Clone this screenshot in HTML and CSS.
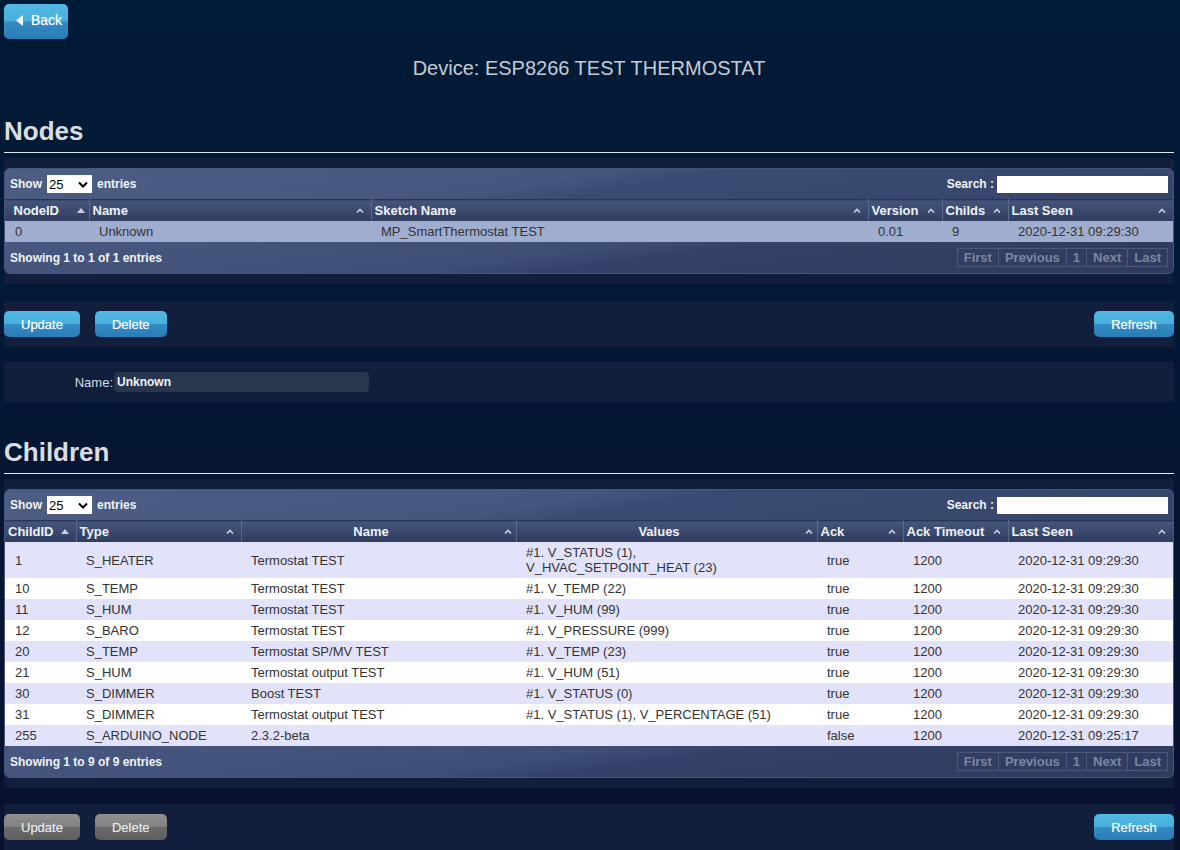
FILE: index.html
```html
<!DOCTYPE html>
<html>
<head>
<meta charset="utf-8">
<title>Device: ESP8266 TEST THERMOSTAT</title>
<link rel="stylesheet" href="styles.css">
</head>
<body>
<div class="page">
  <button class="btn btn-back"><svg class="back-ico" width="7" height="11" viewBox="0 0 7 11"><polygon points="7,0 7,11 0,5.5" fill="#fff"/></svg>Back</button>

  <div class="device-title">Device: ESP8266 TEST THERMOSTAT</div>

  <h2 class="section-title">Nodes</h2>
  <div class="panel">
    <div class="dt-wrapper">
      <div class="dt-top">
        <label class="dt-length">Show <span class="select-box"><select><option>25</option></select><svg width="10" height="7" viewBox="0 0 10 7"><polyline points="1,1.5 5,5.5 9,1.5" fill="none" stroke="#000" stroke-width="2"/></svg></span> entries</label>
        <label class="dt-search">Search :<input type="text"></label>
      </div>
      <table class="dt nodes">
        <colgroup><col style="width:84px"><col style="width:282px"><col style="width:497px"><col style="width:74px"><col style="width:66px"><col style="width:165px"></colgroup>
        <thead>
          <tr>
            <th class="center"><svg class="sort" width="8" height="5" viewBox="0 0 8 5"><polygon points="0,5 8,5 4,0" fill="#c9d0de"/></svg>NodeID</th>
            <th><svg class="sort" width="8" height="5" viewBox="0 0 8 5"><polyline points="1,4.5 4,1.5 7,4.5" fill="none" stroke="#c9d0de" stroke-width="1.6"/></svg>Name</th>
            <th><svg class="sort" width="8" height="5" viewBox="0 0 8 5"><polyline points="1,4.5 4,1.5 7,4.5" fill="none" stroke="#c9d0de" stroke-width="1.6"/></svg>Sketch Name</th>
            <th><svg class="sort" width="8" height="5" viewBox="0 0 8 5"><polyline points="1,4.5 4,1.5 7,4.5" fill="none" stroke="#c9d0de" stroke-width="1.6"/></svg>Version</th>
            <th><svg class="sort" width="8" height="5" viewBox="0 0 8 5"><polyline points="1,4.5 4,1.5 7,4.5" fill="none" stroke="#c9d0de" stroke-width="1.6"/></svg>Childs</th>
            <th><svg class="sort" width="8" height="5" viewBox="0 0 8 5"><polyline points="1,4.5 4,1.5 7,4.5" fill="none" stroke="#c9d0de" stroke-width="1.6"/></svg>Last Seen</th>
          </tr>
        </thead>
        <tbody>
          <tr class="selected"><td>0</td><td>Unknown</td><td>MP_SmartThermostat TEST</td><td>0.01</td><td>9</td><td>2020-12-31 09:29:30</td></tr>
        </tbody>
      </table>
      <div class="dt-bottom">
        <div class="dt-info">Showing 1 to 1 of 1 entries</div>
        <div class="dt-paginate"><span>First</span><span>Previous</span><span>1</span><span>Next</span><span>Last</span></div>
      </div>
    </div>
  </div>

  <div class="panel btn-bar">
    <div class="btn-group">
      <button class="btn">Update</button>
      <button class="btn">Delete</button>
    </div>
    <button class="btn btn-refresh">Refresh</button>
  </div>

  <div class="panel name-panel">
    <label class="name-label">Name:</label>
    <input class="name-input" type="text" value="Unknown">
  </div>

  <h2 class="section-title children-title">Children</h2>
  <div class="panel">
    <div class="dt-wrapper">
      <div class="dt-top">
        <label class="dt-length">Show <span class="select-box"><select><option>25</option></select><svg width="10" height="7" viewBox="0 0 10 7"><polyline points="1,1.5 5,5.5 9,1.5" fill="none" stroke="#000" stroke-width="2"/></svg></span> entries</label>
        <label class="dt-search">Search :<input type="text"></label>
      </div>
      <table class="dt children">
        <colgroup><col style="width:71px"><col style="width:165px"><col style="width:275px"><col style="width:301px"><col style="width:86px"><col style="width:105px"><col style="width:165px"></colgroup>
        <thead>
          <tr>
            <th><svg class="sort" width="8" height="5" viewBox="0 0 8 5"><polygon points="0,5 8,5 4,0" fill="#c9d0de"/></svg>ChildID</th>
            <th><svg class="sort" width="8" height="5" viewBox="0 0 8 5"><polyline points="1,4.5 4,1.5 7,4.5" fill="none" stroke="#c9d0de" stroke-width="1.6"/></svg>Type</th>
            <th class="center"><svg class="sort" width="8" height="5" viewBox="0 0 8 5"><polyline points="1,4.5 4,1.5 7,4.5" fill="none" stroke="#c9d0de" stroke-width="1.6"/></svg>Name</th>
            <th class="center"><svg class="sort" width="8" height="5" viewBox="0 0 8 5"><polyline points="1,4.5 4,1.5 7,4.5" fill="none" stroke="#c9d0de" stroke-width="1.6"/></svg>Values</th>
            <th><svg class="sort" width="8" height="5" viewBox="0 0 8 5"><polyline points="1,4.5 4,1.5 7,4.5" fill="none" stroke="#c9d0de" stroke-width="1.6"/></svg>Ack</th>
            <th><svg class="sort" width="8" height="5" viewBox="0 0 8 5"><polyline points="1,4.5 4,1.5 7,4.5" fill="none" stroke="#c9d0de" stroke-width="1.6"/></svg>Ack Timeout</th>
            <th><svg class="sort" width="8" height="5" viewBox="0 0 8 5"><polyline points="1,4.5 4,1.5 7,4.5" fill="none" stroke="#c9d0de" stroke-width="1.6"/></svg>Last Seen</th>
          </tr>
        </thead>
        <tbody>
          <tr><td>1</td><td>S_HEATER</td><td>Termostat TEST</td><td>#1. V_STATUS (1), <span class="nowrap">V_HVAC_SETPOINT_HEAT (23)</span></td><td>true</td><td>1200</td><td>2020-12-31 09:29:30</td></tr>
          <tr><td>10</td><td>S_TEMP</td><td>Termostat TEST</td><td>#1. V_TEMP (22)</td><td>true</td><td>1200</td><td>2020-12-31 09:29:30</td></tr>
          <tr><td>11</td><td>S_HUM</td><td>Termostat TEST</td><td>#1. V_HUM (99)</td><td>true</td><td>1200</td><td>2020-12-31 09:29:30</td></tr>
          <tr><td>12</td><td>S_BARO</td><td>Termostat TEST</td><td>#1. V_PRESSURE (999)</td><td>true</td><td>1200</td><td>2020-12-31 09:29:30</td></tr>
          <tr><td>20</td><td>S_TEMP</td><td>Termostat SP/MV TEST</td><td>#1. V_TEMP (23)</td><td>true</td><td>1200</td><td>2020-12-31 09:29:30</td></tr>
          <tr><td>21</td><td>S_HUM</td><td>Termostat output TEST</td><td>#1. V_HUM (51)</td><td>true</td><td>1200</td><td>2020-12-31 09:29:30</td></tr>
          <tr><td>30</td><td>S_DIMMER</td><td>Boost TEST</td><td>#1. V_STATUS (0)</td><td>true</td><td>1200</td><td>2020-12-31 09:29:30</td></tr>
          <tr><td>31</td><td>S_DIMMER</td><td>Termostat output TEST</td><td>#1. V_STATUS (1), V_PERCENTAGE (51)</td><td>true</td><td>1200</td><td>2020-12-31 09:29:30</td></tr>
          <tr><td>255</td><td>S_ARDUINO_NODE</td><td>2.3.2-beta</td><td></td><td>false</td><td>1200</td><td>2020-12-31 09:25:17</td></tr>
        </tbody>
      </table>
      <div class="dt-bottom">
        <div class="dt-info">Showing 1 to 9 of 9 entries</div>
        <div class="dt-paginate"><span>First</span><span>Previous</span><span>1</span><span>Next</span><span>Last</span></div>
      </div>
    </div>
  </div>

  <div class="panel btn-bar btn-bar-last">
    <div class="btn-group">
      <button class="btn btn-gray">Update</button>
      <button class="btn btn-gray">Delete</button>
    </div>
    <button class="btn btn-refresh">Refresh</button>
  </div>
</div>
</body>
</html>
```

FILE: styles.css
```css
html, body {
  margin: 0;
  padding: 0;
}
body {
  background: linear-gradient(#001b37 0px, #031936 300px, #061531 500px, #09122f 850px);
  min-height: 850px;
  font-family: "Liberation Sans", Arial, sans-serif;
  font-size: 13px;
  color: #333;
}
.page {
  padding: 4px 6px 0 4px;
}
.nowrap {
  white-space: nowrap;
}

/* Buttons */
.btn {
  font-family: "Liberation Sans", Arial, sans-serif;
  font-size: 13px;
  color: #fff;
  height: 26px;
  padding: 0 17px;
  border: 0;
  border-radius: 5px;
  background: linear-gradient(#52b9e3 0%, #47afdc 48%, #348bc4 52%, #2a7cb7 100%);
  text-shadow: 0 0 1px rgba(255,255,255,0.5);
  cursor: pointer;
  display: inline-flex;
  align-items: center;
}
.btn-back {
  height: 35px;
  padding: 0 6px 3px 12px;
  font-size: 14px;
  gap: 8px;
}
.btn-gray {
  color: #e6e6e6;
  background: linear-gradient(#909090 0%, #828282 48%, #6a6a6a 52%, #5e5e5e 100%);
}

.device-title {
  margin-top: 18px;
  text-align: center;
  font-size: 20px;
  line-height: 23px;
  color: #c6cbd4;
}

.section-title {
  margin: 36px 0 5px 0;
  font-size: 26px;
  line-height: 30px;
  font-weight: bold;
  color: #dcdde0;
  padding-bottom: 6px;
  border-bottom: 1px solid #e6e8ee;
}
.children-title {
  margin-top: 35px;
}

.panel {
  background: #111f3d;
  padding: 10px 0;
}

/* DataTables-like */
.dt-wrapper {
  border: 1px solid #46557a;
  border-radius: 6px;
  overflow: hidden;
  background: #3a4970;
}
.dt-top {
  height: 30px;
  display: flex;
  align-items: center;
  justify-content: space-between;
  padding: 0 5px;
  background: linear-gradient(170deg, #4d5d84 0%, #46567c 45%, #3b4a70 55%, #36456a 100%);
  color: #f0f3f8;
  font-size: 12px;
  font-weight: bold;
}
.dt-length {
  display: flex;
  align-items: center;
  gap: 5px;
}
.select-box {
  display: inline-flex;
  align-items: center;
  background: #fff;
  width: 45px;
  height: 18px;
  box-sizing: border-box;
  padding: 0 4px 0 2px;
}
.select-box select {
  appearance: none;
  -webkit-appearance: none;
  border: 0;
  background: transparent;
  font-family: "Liberation Sans", Arial, sans-serif;
  font-size: 13px;
  color: #000;
  width: 29px;
  padding: 0;
  outline: none;
}
.dt-search {
  display: flex;
  align-items: center;
  gap: 3px;
}
.dt-search input {
  width: 171px;
  height: 17px;
  box-sizing: border-box;
  border: 0;
  background: #fff;
  margin: 0;
  padding: 0 2px;
}

table.dt {
  width: 1168px;
  table-layout: fixed;
  border-collapse: collapse;
}
table.dt th {
  height: 21px;
  box-sizing: border-box;
  padding: 3px 3px;
  line-height: 15px;
  font-size: 13px;
  font-weight: bold;
  color: #eef2f8;
  text-align: left;
  white-space: nowrap;
  background: linear-gradient(#45557a, #2f3d5f);
  border-top: 1px solid #2a3658;
  border-right: 1px solid #5a6890;
}
table.dt th:last-child {
  border-right: 0;
}
table.dt th.center {
  text-align: center;
  padding-right: 18px;
}
table.nodes th.center {
  padding-right: 24px;
}
.sort {
  float: right;
  margin: 5px 4px 0 0;
}
table.dt th.center .sort {
  margin-right: -14px;
}
table.nodes th.center .sort {
  margin-right: -20px;
}
table.dt td {
  padding: 3px 10px;
  line-height: 15px;
  font-size: 13px;
  color: #333;
  vertical-align: middle;
  background: #fff;
}
table.nodes tr.selected td {
  background: #9fadcf;
}
table.children tbody tr:nth-child(odd) td {
  background: #e2e3fb;
}

.dt-bottom {
  height: 31px;
  display: flex;
  align-items: center;
  justify-content: space-between;
  padding: 0 5px;
  background: linear-gradient(172deg, #485880 0%, #3f4e74 45%, #344269 55%, #2e3b5d 100%);
  color: #f0f3f8;
  font-size: 12px;
  font-weight: bold;
}
.dt-paginate {
  display: flex;
}
.dt-paginate span {
  font-size: 13px;
  font-weight: bold;
  color: #7a87a1;
  border: 1px solid #4a5879;
  margin-left: -1px;
  height: 19px;
  box-sizing: border-box;
  line-height: 17px;
  padding: 0 6px;
}

/* Button bars */
.btn-bar {
  margin-top: 17px;
  display: flex;
  justify-content: space-between;
  align-items: center;
}
.btn-bar-last {
  margin-top: 16px;
}
.btn-group {
  display: flex;
  gap: 15px;
}
.btn-refresh {
  padding: 0 17px;
  width: 80px;
  justify-content: center;
}

.name-panel {
  margin-top: 15px;
  display: flex;
  align-items: center;
}
.name-label {
  width: 109px;
  text-align: right;
  color: #d6dbe4;
  font-size: 13px;
}
.name-input {
  width: 255px;
  height: 20px;
  box-sizing: border-box;
  border: 0;
  border-radius: 4px;
  background: #283650;
  color: #f2f4f8;
  font-family: "Liberation Sans", Arial, sans-serif;
  font-size: 12px;
  font-weight: bold;
  padding: 0 3px;
  margin: 0 0 0 1px;
}
```
